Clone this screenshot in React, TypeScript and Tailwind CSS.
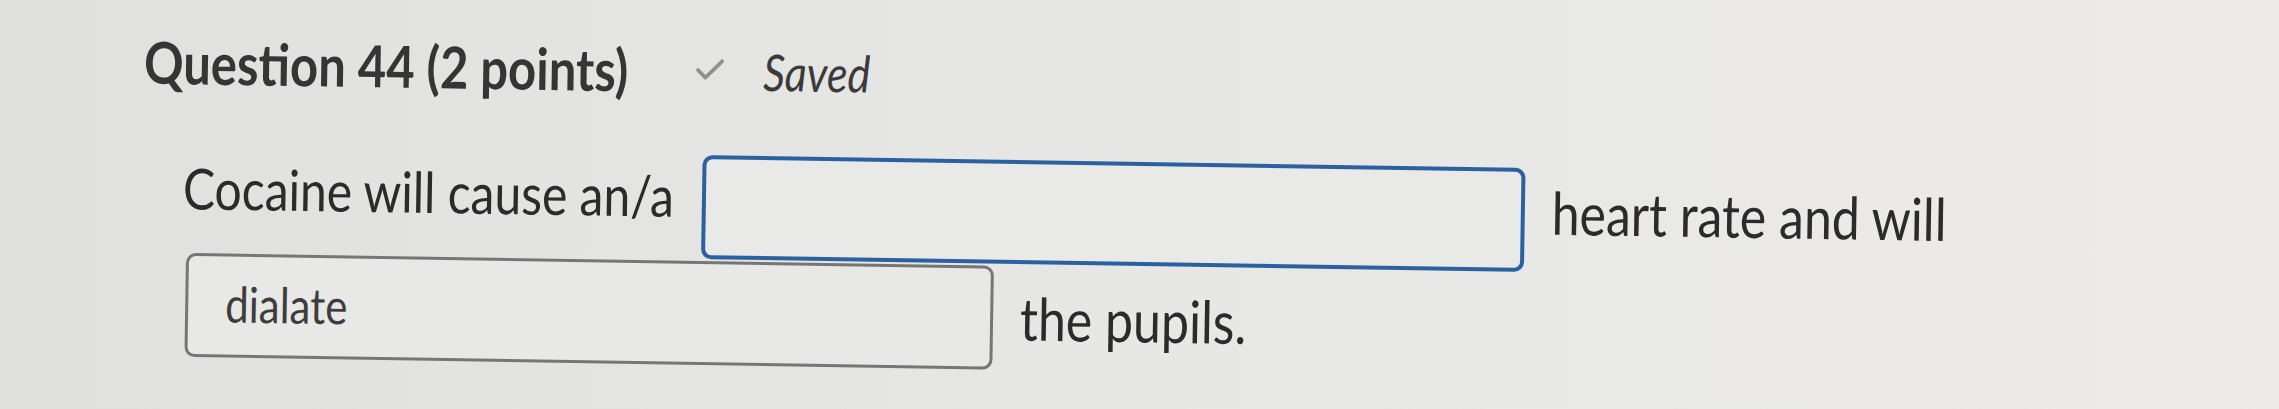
import { Check } from 'lucide-react';

export default function App() {
	return (
		<div className="w-full h-[409px] overflow-hidden bg-gradient-to-r from-[#e0e0de] via-[#e7e7e5] to-[#ecebea] font-['Lato',sans-serif] text-[#2b2b2b]">
			<div className="origin-top-left rotate-[0.9deg] pl-[145px] pt-[29px]">
				<div className="flex items-center h-[60px]">
					<h2 className="inline-block scale-y-[1.18] text-[49px] font-bold text-[#353535] leading-none">Question 44 (2 points)</h2>
					<Check className="ml-[64px] w-[36px] h-[40px] text-[#909090]" strokeWidth={2.5} />
					<span className="ml-[35px] inline-block scale-y-[1.18] text-[43px] italic text-[#3a3a3a] leading-none">Saved</span>
				</div>

				<div className="mt-[55px] flex items-center pl-[41px]">
					<span className="mt-[4px] mb-[26px] inline-block scale-y-[1.18] text-[48px] leading-none">Cocaine will cause an/a</span>
					<div className="ml-[28px] w-[823px] h-[104px] rounded-[10px] border-[4px] border-[#2c61a0] bg-[#e9e9e7]" />
					<span className="ml-[27px] mb-[16px] inline-block scale-y-[1.18] text-[50px] leading-none">heart rate and will</span>
				</div>

				<div className="mt-[2px] flex items-center pl-[45px]">
					<div className="w-[808px] h-[104px] rounded-[10px] border-[3px] border-[#767676] bg-[#e8e8e6] flex items-center px-[37px]">
						<span className="mb-[4px] inline-block scale-y-[1.18] text-[42px] text-[#3d3d3d] leading-none">dialate</span>
					</div>
					<span className="ml-[27px] inline-block scale-y-[1.18] text-[50px] leading-none">the pupils.</span>
				</div>
			</div>
		</div>
	);
}
